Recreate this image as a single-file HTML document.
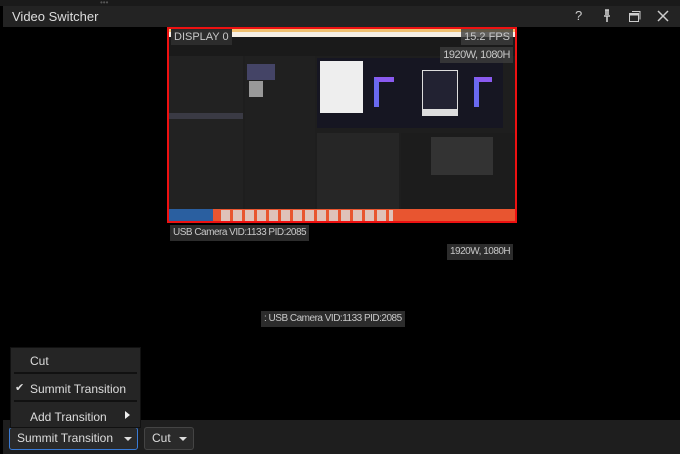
<!DOCTYPE html>
<html><head><meta charset="utf-8"><style>
*{margin:0;padding:0;box-sizing:border-box}
body{width:680px;height:454px;background:#000;position:relative;overflow:hidden;font-family:"Liberation Sans",Arial,sans-serif}
.a{position:absolute}
.lbl{position:absolute;background:#2c2c2c;color:#c8c8c8;font-size:10px;line-height:16px;padding:0 3px;white-space:nowrap;letter-spacing:-0.5px}
</style></head><body>
<div class="a" style="left:0;top:0;width:680px;height:6px;background:#1a1a1a"></div>
<div class="a" style="left:100px;top:1px;color:#555;font-size:8px;line-height:4px">•••</div>
<div class="a" style="left:3px;top:6px;width:677px;height:21px;background:#232323"></div>
<div class="a" style="left:12px;top:9px;color:#ddd;font-size:13px">Video Switcher</div>
<div class="a" style="left:575px;top:8px;color:#ccc;font-size:13px">?</div>
<svg class="a" style="left:600px;top:9px" width="14" height="14" viewBox="0 0 14 14"><path d="M5 1h4M6 1v5M8 1v5M4 7h6M7 7v6" stroke="#ccc" stroke-width="1.6" fill="none"/></svg>
<svg class="a" style="left:628px;top:9px" width="14" height="14" viewBox="0 0 14 14"><rect x="1.5" y="4.5" width="9" height="8" stroke="#ccc" fill="none"/><path d="M4 2.5h8v8" stroke="#ccc" fill="none"/><rect x="1.5" y="4.5" width="9" height="2" fill="#ccc"/></svg>
<svg class="a" style="left:656px;top:9px" width="14" height="14" viewBox="0 0 14 14"><path d="M2 2l10 10M12 2L2 12" stroke="#ccc" stroke-width="1.5"/></svg>

<!-- preview -->
<div class="a" style="left:167px;top:27px;width:350px;height:196px;border:2px solid #ee1111;background:#1e1e1e;overflow:hidden">
 <div class="a" style="left:0;top:0;width:346px;height:3px;background:#f0c070"></div>
 <div class="a" style="left:0;top:3px;width:346px;height:5px;background:#f6efe6"></div>
 <div class="a" style="left:0;top:8px;width:346px;height:19px;background:#1a1a1a"></div>
 <div class="a" style="left:0;top:27px;width:74px;height:160px;background:#222"></div>
 <div class="a" style="left:0;top:84px;width:74px;height:6px;background:#3a3a44"></div>
 <div class="a" style="left:76px;top:27px;width:70px;height:160px;background:#202020"></div>
 <div class="a" style="left:78px;top:35px;width:28px;height:16px;background:#446"></div>
 <div class="a" style="left:80px;top:52px;width:14px;height:16px;background:#999"></div>
 <div class="a" style="left:148px;top:29px;width:100px;height:70px;background:#161622"></div>
 <div class="a" style="left:151px;top:32px;width:43px;height:52px;background:#eee"></div>
 <div class="a" style="left:248px;top:29px;width:86px;height:70px;background:#161622"></div>
 <div class="a" style="left:253px;top:41px;width:36px;height:46px;background:#ddd"></div>
 <div class="a" style="left:254px;top:42px;width:34px;height:38px;background:#222232"></div>
 <div class="a" style="left:205px;top:48px;width:20px;height:30px;border-left:5px solid #6a6af0;border-top:5px solid #8a5af0"></div>
 <div class="a" style="left:305px;top:48px;width:18px;height:30px;border-left:5px solid #6a6af0;border-top:5px solid #8a5af0"></div>
 <div class="a" style="left:148px;top:104px;width:82px;height:82px;background:#262626"></div>
 <div class="a" style="left:232px;top:104px;width:114px;height:82px;background:#1c1c1c"></div>
 <div class="a" style="left:262px;top:108px;width:62px;height:38px;background:#333"></div>
 <div class="a" style="left:0;top:180px;width:346px;height:13px;background:#e85530"></div>
 <div class="a" style="left:0;top:180px;width:44px;height:13px;background:#2a5fa0"></div>
 <div class="a" style="left:52px;top:181px;width:172px;height:11px;background:repeating-linear-gradient(90deg,#ddd 0 9px,transparent 9px 12px);opacity:.8"></div>
 <div class="lbl" style="left:2px;top:0;font-size:11px;letter-spacing:0">DISPLAY 0</div>
 <div class="lbl" style="right:2px;top:0;font-size:11px;letter-spacing:0;background:rgba(60,60,60,.8)">15.2 FPS</div>
 <div class="lbl" style="right:2px;top:18px;font-size:11px;background:rgba(60,60,60,.8)">1920W, 1080H</div>
</div>
<div class="lbl" style="left:170px;top:225px">USB Camera VID:1133 PID:2085</div>
<div class="lbl" style="left:447px;top:244px">1920W, 1080H</div>
<div class="lbl" style="left:261px;top:311px">: USB Camera VID:1133 PID:2085</div>

<!-- bottom bar -->
<div class="a" style="left:3px;top:420px;width:677px;height:34px;background:#1e1e1e"></div>
<div class="a" style="left:9px;top:427px;width:129px;height:23px;border:1px solid #3a7bd5;border-radius:3px;background:#2a2a2a;color:#ddd;font-size:12px;line-height:21px;padding-left:7px">Summit Transition<span class="a" style="right:5px;top:9px;border:4px solid transparent;border-top:4px solid #ddd;border-bottom:0"></span></div>
<div class="a" style="left:144px;top:427px;width:50px;height:23px;border:1px solid #444;border-radius:3px;background:#2a2a2a;color:#ddd;font-size:12px;line-height:21px;padding-left:7px">Cut<span class="a" style="right:6px;top:9px;border:4px solid transparent;border-top:4px solid #ddd;border-bottom:0"></span></div>

<!-- menu -->
<div class="a" style="left:10px;top:347px;width:131px;height:81px;background:#252525;border:1px solid #111;color:#ddd;font-size:12px">
 <div class="a" style="left:19px;top:6px">Cut</div>
 <div class="a" style="left:3px;top:24px;width:123px;height:2px;background:#111"></div>
 <div class="a" style="left:4px;top:33px;font-size:11px">✔</div>
 <div class="a" style="left:19px;top:34px">Summit Transition</div>
 <div class="a" style="left:3px;top:52px;width:123px;height:2px;background:#111"></div>
 <div class="a" style="left:19px;top:62px">Add Transition</div>
 <div class="a" style="left:114px;top:63px;border:4px solid transparent;border-left:5px solid #eee;border-right:0"></div>
</div>
</body></html>
